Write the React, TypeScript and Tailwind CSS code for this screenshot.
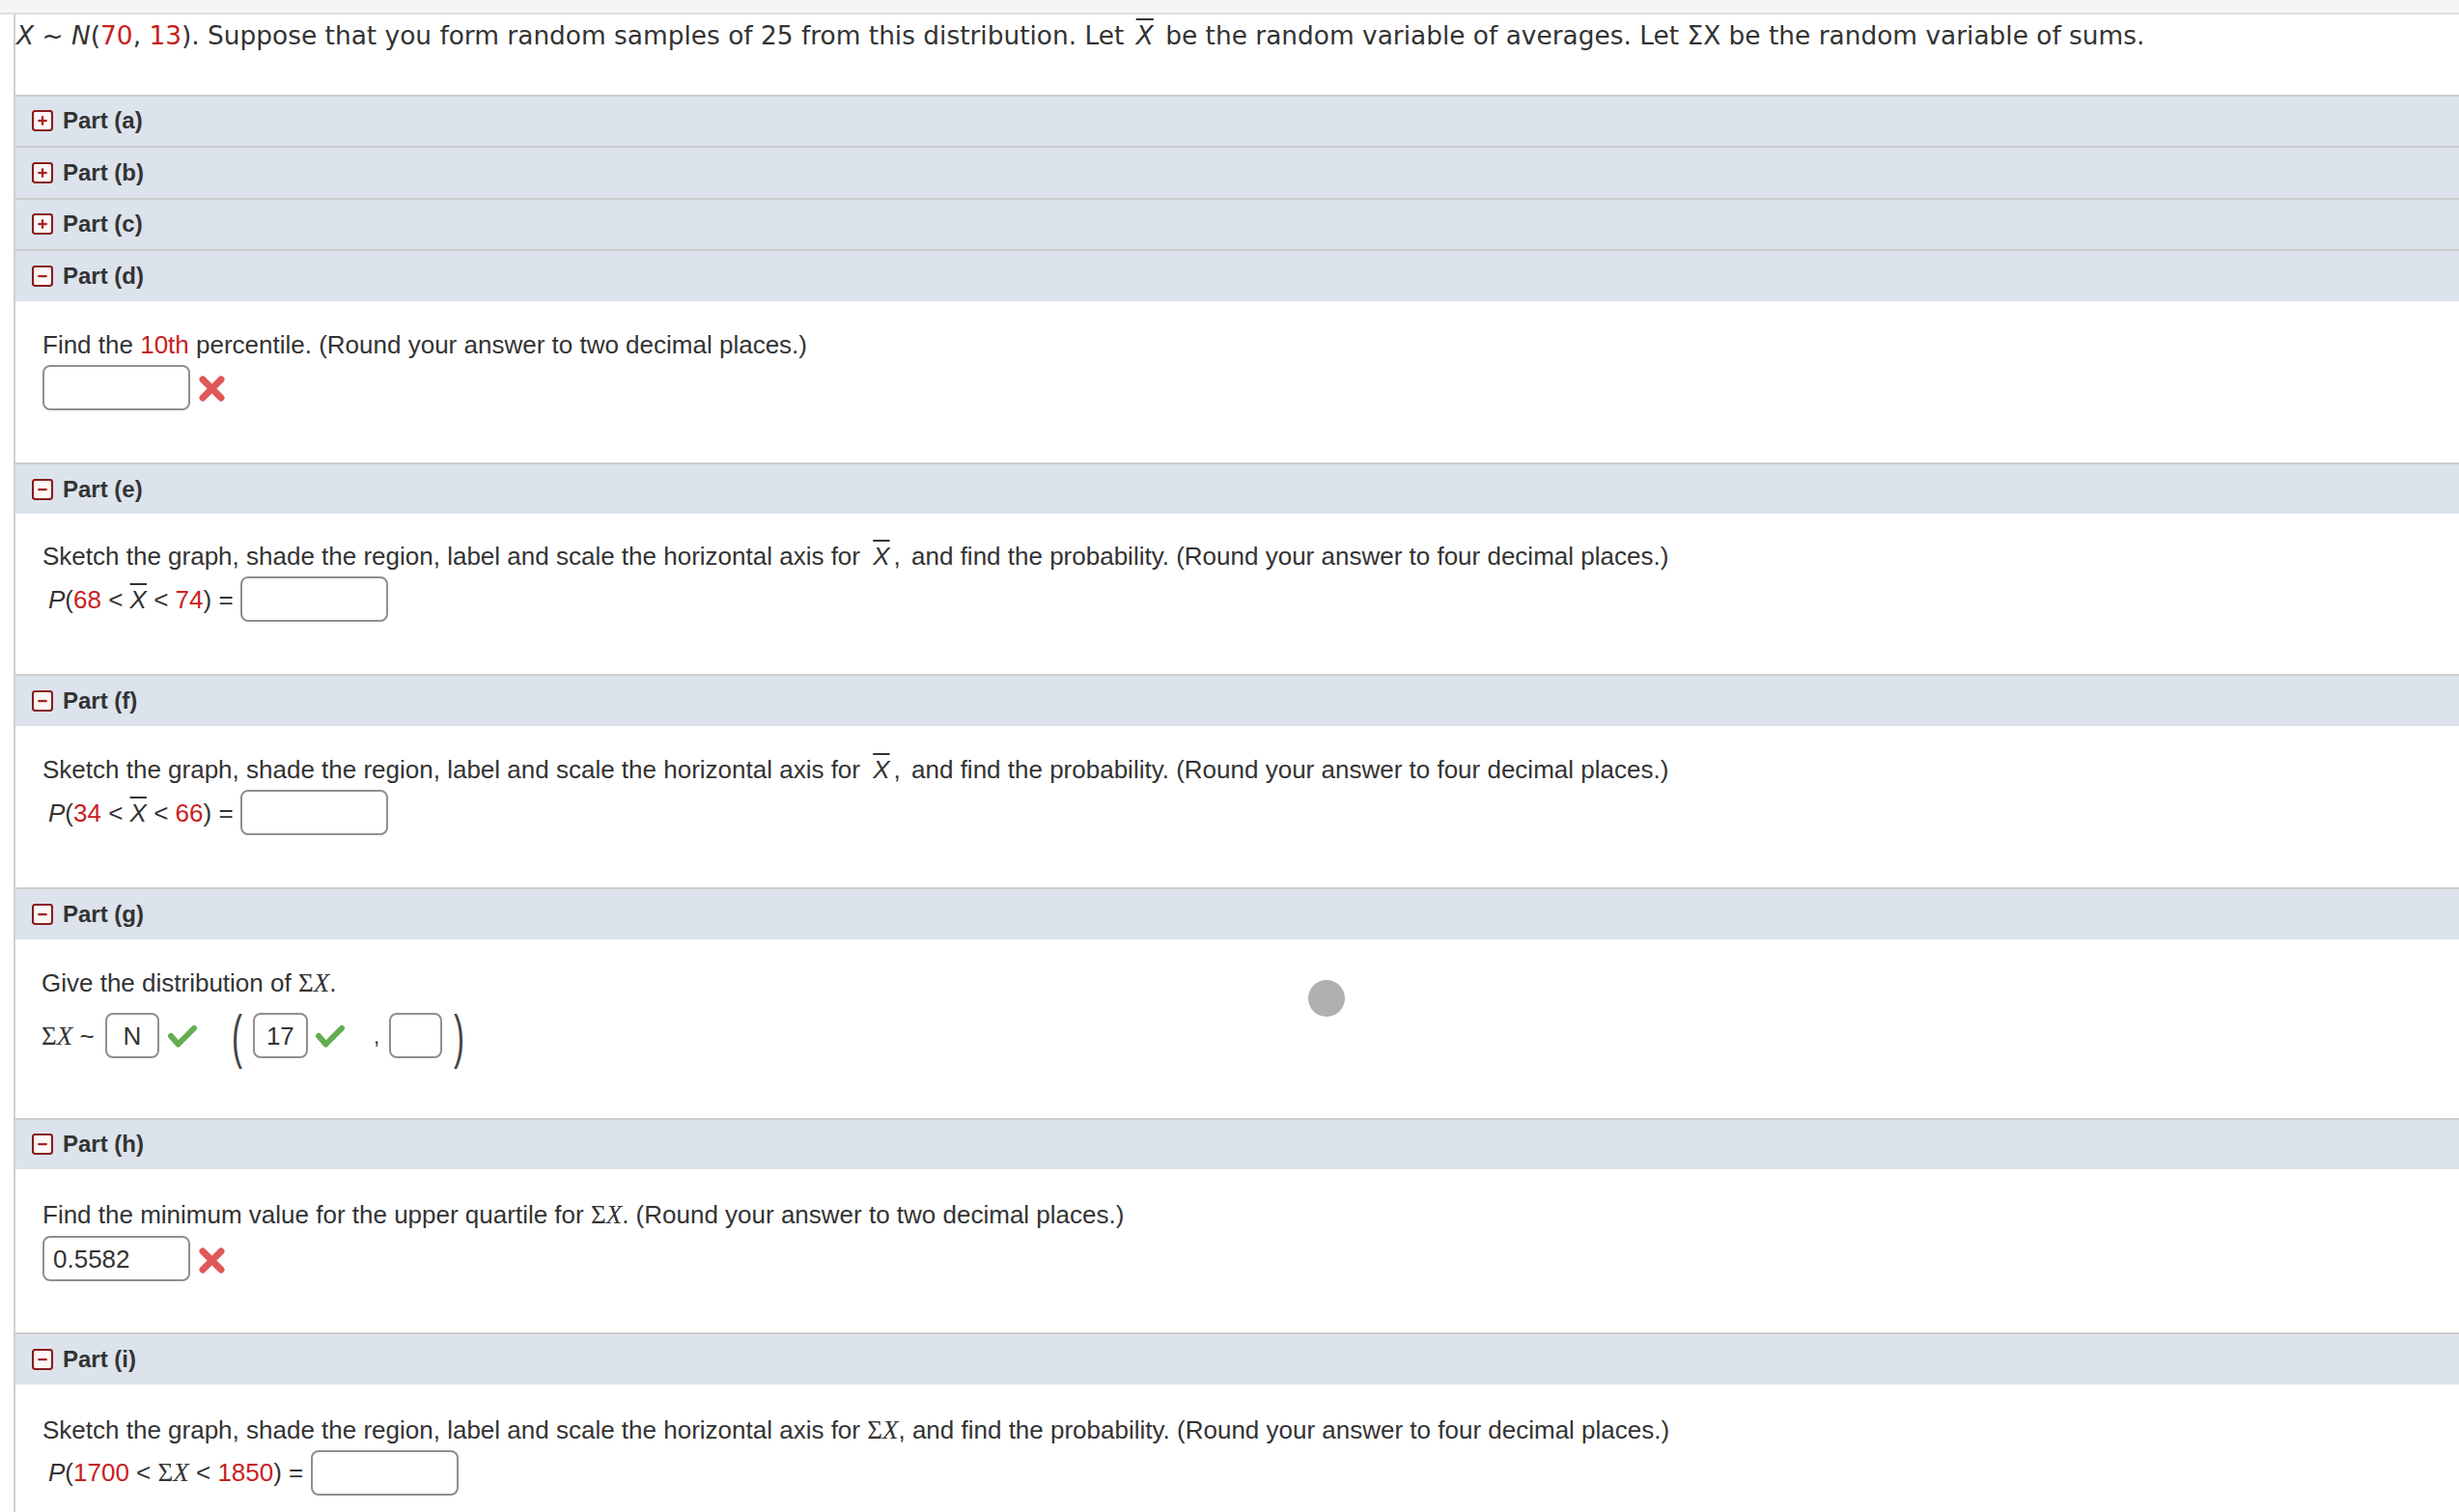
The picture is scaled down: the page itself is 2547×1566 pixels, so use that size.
import React from 'react';

const red = 'text-[#c8211d]';
const serif = "font-['Liberation_Serif',serif]";

function Toggle({ open }: { open: boolean }) {
  return (
    <svg width="22" height="22" viewBox="0 0 22 22" className="shrink-0">
      <rect x="1" y="1" width="20" height="20" rx="2.5" fill="#fcf8f8" stroke="#8b1c1c" strokeWidth="2.2" />
      <rect x="6.3" y="9.9" width="9.4" height="2.3" fill="#a82222" />
      {!open && <rect x="9.85" y="6.3" width="2.3" height="9.4" fill="#a82222" />}
    </svg>
  );
}

function PartHeader({ label, open }: { label: string; open?: boolean }) {
  return (
    <div className="h-[53.6px] border-t-2 border-[#cdcdcd] bg-[#dce3ec] flex items-center pl-[17px] gap-[10px]">
      <Toggle open={!!open} />
      <span className="text-[24px] font-bold text-[#333333] leading-none">Part ({label})</span>
    </div>
  );
}

function Box({ w, children, center }: { w: string; children?: React.ReactNode; center?: boolean }) {
  return (
    <div
      className={`${w} h-[47px] shrink-0 border-2 border-[#8f8f8f] rounded-[8px] bg-white flex items-center ${
        center ? 'justify-center' : 'pl-[9px]'
      }`}
    >
      {children}
    </div>
  );
}

function WrongMark() {
  return (
    <svg width="29" height="29" viewBox="0 0 29 29" className="shrink-0 ml-[8px] mt-[3px]">
      <path d="M5 5 L24 24 M24 5 L5 24" stroke="#e05858" strokeWidth="7" strokeLinecap="round" />
    </svg>
  );
}

function RightMark({ className }: { className: string }) {
  return (
    <svg width="30" height="24" viewBox="0 0 30 24" className={`shrink-0 ${className}`}>
      <path
        d="M3 12 L10.5 20.5 L27 4"
        fill="none"
        stroke="#64ad52"
        strokeWidth="6"
        strokeLinecap="round"
        strokeLinejoin="round"
      />
    </svg>
  );
}

function Xbar() {
  return <span className="italic overline decoration-2">X</span>;
}

function SumX() {
  return (
    <span className={`${serif} text-[27px]`}>
      Σ<span className="italic">X</span>
    </span>
  );
}

const sketch = 'Sketch the graph, shade the region, label and scale the horizontal axis for';

export default function App() {
  return (
    <div className="relative w-full h-[1566px] overflow-hidden bg-white text-[#333333] font-['Liberation_Sans',Arial,sans-serif]">
      <div className="h-[15px] bg-[#f5f5f5] border-b-2 border-[#dddddd]" />
      <div className="ml-[14px] border-l-2 border-[#d0d0d0] h-[1551px]">
        <div className="h-[82.5px] pt-[7px] pl-[1px] font-['DejaVu_Sans',sans-serif] text-[26.4px] leading-[30px] whitespace-nowrap">
          <span className="italic">X</span> ~ <span className="italic">N</span>(<span className={red}>70</span>,{' '}
          <span className={red}>13</span>). Suppose that you form random samples of 25 from this distribution. Let{' '}
          <span className="mx-[4px] italic overline decoration-2">X</span> be the random variable of averages. Let ΣX be
          the random variable of sums.
        </div>

        <PartHeader label="a" />
        <PartHeader label="b" />
        <PartHeader label="c" />
        <PartHeader label="d" open />
        <div className="h-[167px] pt-[30px] pl-[28px] text-[26px] leading-[30px]">
          <p>
            Find the <span className={red}>10th</span> percentile. (Round your answer to two decimal places.)
          </p>
          <div className="mt-[6px] flex items-center">
            <Box w="w-[153px]" />
            <WrongMark />
          </div>
        </div>

        <PartHeader label="e" open />
        <div className="h-[166px] pt-[29px] pl-[28px] text-[26px] leading-[30px]">
          <p>
            {sketch} <span className="ml-[6px] mr-[4px]"><Xbar /></span>,{' '}
            <span className="ml-[4px]">and find the probability. (Round your answer to four decimal places.)</span>
          </p>
          <div className="mt-[6px] flex items-center pl-[6px] whitespace-pre">
            <span>
              <span className="italic">P</span>(<span className={red}>68</span> &lt; <Xbar /> &lt;{' '}
              <span className={red}>74</span>) ={' '}
            </span>
            <Box w="w-[153px]" />
          </div>
        </div>

        <PartHeader label="f" open />
        <div className="h-[167px] pt-[30px] pl-[28px] text-[26px] leading-[30px]">
          <p>
            {sketch} <span className="ml-[6px] mr-[4px]"><Xbar /></span>,{' '}
            <span className="ml-[4px]">and find the probability. (Round your answer to four decimal places.)</span>
          </p>
          <div className="mt-[6px] flex items-center pl-[6px] whitespace-pre">
            <span>
              <span className="italic">P</span>(<span className={red}>34</span> &lt; <Xbar /> &lt;{' '}
              <span className={red}>66</span>) ={' '}
            </span>
            <Box w="w-[153px]" />
          </div>
        </div>

        <PartHeader label="g" open />
        <div className="h-[185px] pt-[30px] pl-[27px] text-[26px] leading-[30px]">
          <p>
            Give the distribution of <SumX />.
          </p>
          <div className="mt-[10px] h-[60px] flex items-center whitespace-pre">
            <span className="mr-[4px]">
              <SumX /> ~{' '}
            </span>
            <Box w="w-[56px]" center>
              N
            </Box>
            <RightMark className="ml-[9px]" />
            <span className="ml-[36px] inline-block text-[33px] leading-none scale-y-[1.85] text-[#444444]">(</span>
            <span className="ml-[11px]">
              <Box w="w-[57px]" center>
                17
              </Box>
            </span>
            <RightMark className="ml-[8px]" />
            <span className="ml-[30px] text-[22px] self-end mb-[14px]">,</span>
            <span className="ml-[10px]">
              <Box w="w-[55px]" />
            </span>
            <span className="ml-[12px] inline-block text-[33px] leading-none scale-y-[1.85] text-[#444444]">)</span>
          </div>
        </div>

        <PartHeader label="h" open />
        <div className="h-[169px] pt-[32px] pl-[28px] text-[26px] leading-[30px]">
          <p>
            Find the minimum value for the upper quartile for <SumX />. (Round your answer to two decimal places.)
          </p>
          <div className="mt-[7px] flex items-center">
            <Box w="w-[153px]">0.5582</Box>
            <WrongMark />
          </div>
        </div>

        <PartHeader label="i" open />
        <div className="pt-[32px] pl-[28px] text-[26px] leading-[30px]">
          <p>
            {sketch} <SumX />, and find the probability. (Round your answer to four decimal places.)
          </p>
          <div className="mt-[6px] flex items-center pl-[6px] whitespace-pre">
            <span>
              <span className="italic">P</span>(<span className={red}>1700</span> &lt; <SumX /> &lt;{' '}
              <span className={red}>1850</span>) ={' '}
            </span>
            <Box w="w-[153px]" />
          </div>
        </div>
      </div>

      <div className="absolute left-[1355px] top-[1015px] w-[38px] h-[38px] rounded-full bg-[#b0b0b0]" />
    </div>
  );
}
